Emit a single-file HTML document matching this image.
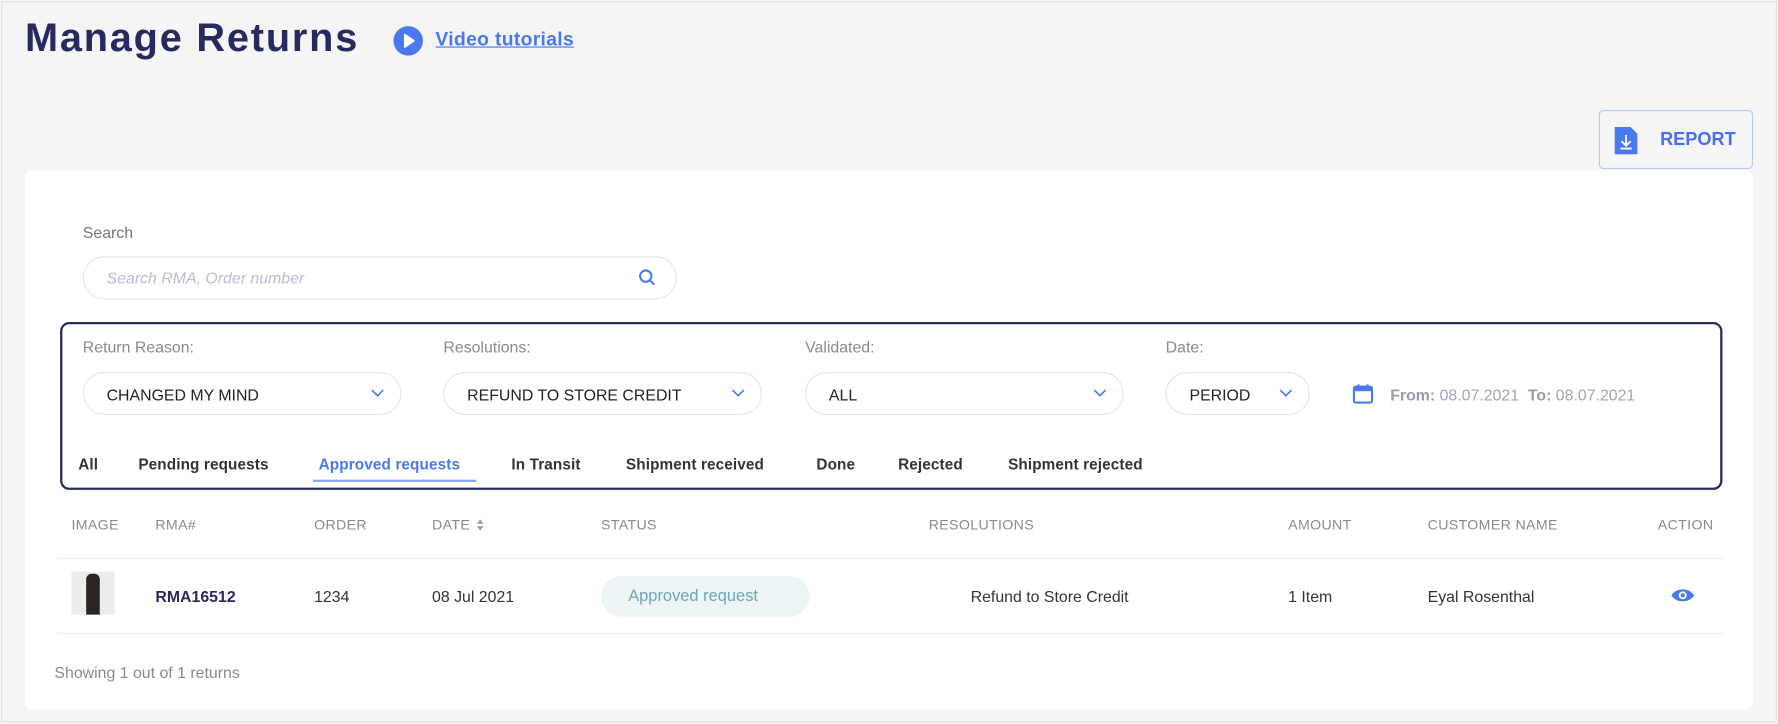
<!DOCTYPE html>
<html><head><style>
html,body{margin:0;padding:0;width:1778px;height:724px;overflow:hidden;background:#f5f5f5;}
#w{position:absolute;left:0;top:0;width:1568px;height:638.5px;transform:scale(1.13393);transform-origin:0 0;font-family:"Liberation Sans",sans-serif;}
.a{position:absolute;white-space:nowrap;}
.frame{position:absolute;left:1px;top:1px;width:1564px;height:634px;border:1px solid #e2e2e6;background:#f5f5f5;}
.card{position:absolute;left:22px;top:150px;width:1524px;height:476px;background:#fff;border-radius:8px;}
.lbl{color:#8a8a8a;font-size:14px;}
.sel{position:absolute;height:36px;border:1px solid #e4e4ec;border-radius:19px;background:#fff;}
.sel span{position:absolute;left:20px;top:11px;font-size:14px;color:#222;}
.sel svg{position:absolute;right:14px;top:14px;}
.tab{font-size:13.5px;color:#333;font-weight:bold;top:402px;letter-spacing:.1px;}
.th{font-size:12.5px;color:#8a8a8a;top:456px;letter-spacing:.3px;}
.td{font-size:14px;color:#333;top:518px;}
</style></head><body><div id="w">
<div class="frame"></div>
<div class="a" style="left:22px;top:14px;font-size:35px;font-weight:bold;color:#262a5c;letter-spacing:1.6px;">Manage Returns</div>
<svg class="a" style="left:347px;top:23px" width="26" height="26"><circle cx="13" cy="13" r="13" fill="#4a78f0"/><path d="M10 7.5L18 13L10 18.5Z" fill="#fff" stroke="#fff" stroke-width="1.5" stroke-linejoin="round"/></svg>
<div class="a" style="left:384px;top:25px;font-size:17px;font-weight:bold;color:#4a78f0;text-decoration:underline;letter-spacing:.3px;">Video tutorials</div>
<div class="a" style="left:1410px;top:97px;width:134px;height:50px;border:1.5px solid #b8c8f4;border-radius:4px;background:#f5f5f5;"></div>
<svg class="a" style="left:1422px;top:110px" width="24" height="28"><path d="M2 2h14l6 6v18H2z" fill="#4a78f0"/><path d="M12 9v9M8 14.5l4 4 4-4M7 21h10" stroke="#fff" stroke-width="1.6" fill="none"/></svg>
<div class="a" style="left:1464px;top:115px;font-size:16px;font-weight:bold;color:#4a6ef0;">REPORT</div>
<div class="card"></div>
<div class="a lbl" style="left:73px;top:197px;color:#777">Search</div>
<div class="a" style="left:73px;top:226px;width:522px;height:36px;border:1px solid #e4e4ec;border-radius:19px;"></div>
<div class="a" style="left:94px;top:237px;font-size:14px;color:#b8bcd0;font-style:italic;">Search RMA, Order number</div>
<svg class="a" style="left:563px;top:237px" width="16" height="16"><circle cx="6.5" cy="6.5" r="5" stroke="#4a78f0" stroke-width="1.8" fill="none"/><path d="M10 10l4 4" stroke="#4a78f0" stroke-width="1.8"/></svg>
<div class="a" style="left:53px;top:284px;width:1462px;height:144px;border:2px solid #262a5c;border-radius:8px;"></div>
<div class="a lbl" style="left:73px;top:298px">Return Reason:</div>
<div class="a lbl" style="left:391px;top:298px">Resolutions:</div>
<div class="a lbl" style="left:710px;top:298px">Validated:</div>
<div class="a lbl" style="left:1028px;top:298px">Date:</div>
<div class="sel" style="left:73px;top:328px;width:279px"><span>CHANGED MY MIND</span><svg width="12" height="8"><path d="M1 1l5 5 5-5" stroke="#4a78f0" stroke-width="1.4" fill="none"/></svg></div>
<div class="sel" style="left:391px;top:328px;width:279px"><span>REFUND TO STORE CREDIT</span><svg width="12" height="8"><path d="M1 1l5 5 5-5" stroke="#4a78f0" stroke-width="1.4" fill="none"/></svg></div>
<div class="sel" style="left:710px;top:328px;width:279px"><span>ALL</span><svg width="12" height="8"><path d="M1 1l5 5 5-5" stroke="#4a78f0" stroke-width="1.4" fill="none"/></svg></div>
<div class="sel" style="left:1028px;top:328px;width:125px"><span>PERIOD</span><svg width="12" height="8"><path d="M1 1l5 5 5-5" stroke="#4a78f0" stroke-width="1.4" fill="none"/></svg></div>
<svg class="a" style="left:1192px;top:337px" width="20" height="20"><rect x="2" y="4" width="16" height="14" rx="1.5" stroke="#4a78f0" stroke-width="1.8" fill="none"/><rect x="2" y="4" width="16" height="4" fill="#4a78f0"/><path d="M6 2v4M14 2v4" stroke="#4a78f0" stroke-width="1.8"/></svg>
<div class="a" style="left:1226px;top:340px;font-size:14px;color:#a0a4b8;"><b style="color:#9a9aa8">From:</b> 08.07.2021&nbsp; <b style="color:#9a9aa8">To:</b> 08.07.2021</div>
<div class="a tab" style="left:69px">All</div>
<div class="a tab" style="left:122px">Pending requests</div>
<div class="a tab" style="left:281px;color:#4a78f0">Approved requests</div>
<div class="a" style="left:276px;top:423px;width:144px;height:2px;background:#8aa4f4"></div>
<div class="a tab" style="left:451px">In Transit</div>
<div class="a tab" style="left:552px">Shipment received</div>
<div class="a tab" style="left:720px">Done</div>
<div class="a tab" style="left:792px">Rejected</div>
<div class="a tab" style="left:889px">Shipment rejected</div>
<div class="a th" style="left:63px">IMAGE</div>
<div class="a th" style="left:137px">RMA#</div>
<div class="a th" style="left:277px">ORDER</div>
<div class="a th" style="left:381px">DATE</div>
<svg class="a" style="left:420px;top:457px" width="7" height="12"><path d="M0.5 5L3.5 1L6.5 5ZM0.5 7L3.5 11L6.5 7Z" fill="#9a9aa8"/></svg>
<div class="a th" style="left:530px">STATUS</div>
<div class="a th" style="left:819px">RESOLUTIONS</div>
<div class="a th" style="left:1136px">AMOUNT</div>
<div class="a th" style="left:1259px">CUSTOMER NAME</div>
<div class="a th" style="left:1462px">ACTION</div>
<div class="a" style="left:50px;top:492px;width:1470px;height:1px;background:#eceef4"></div>
<div class="a" style="left:63px;top:504px;width:38px;height:38px;background:#ececec"></div>
<div class="a" style="left:76px;top:506px;width:12px;height:36px;background:#2a2422;border-radius:5px 5px 0 0"></div>
<div class="a td" style="left:137px;font-weight:bold;color:#262a5c">RMA16512</div>
<div class="a td" style="left:277px">1234</div>
<div class="a td" style="left:381px">08 Jul 2021</div>
<div class="a" style="left:530px;top:508px;width:184px;height:36px;border-radius:18px;background:#edf4f6"></div>
<div class="a td" style="left:554px;color:#6ea5b8;font-size:14.5px">Approved request</div>
<div class="a td" style="left:856px">Refund to Store Credit</div>
<div class="a td" style="left:1136px">1 Item</div>
<div class="a td" style="left:1259px">Eyal Rosenthal</div>
<svg class="a" style="left:1473px;top:518px" width="22" height="14"><path d="M1 7C5 0 17 0 21 7C17 14 5 14 1 7Z" fill="#4a78f0"/><circle cx="11" cy="7" r="3.5" fill="#fff"/><circle cx="11" cy="7" r="1.8" fill="#4a78f0"/></svg>
<div class="a" style="left:50px;top:558px;width:1470px;height:1px;background:#eceef4"></div>
<div class="a" style="left:48px;top:585px;font-size:14px;color:#8a8a8a">Showing 1 out of 1 returns</div>
</div></body></html>
